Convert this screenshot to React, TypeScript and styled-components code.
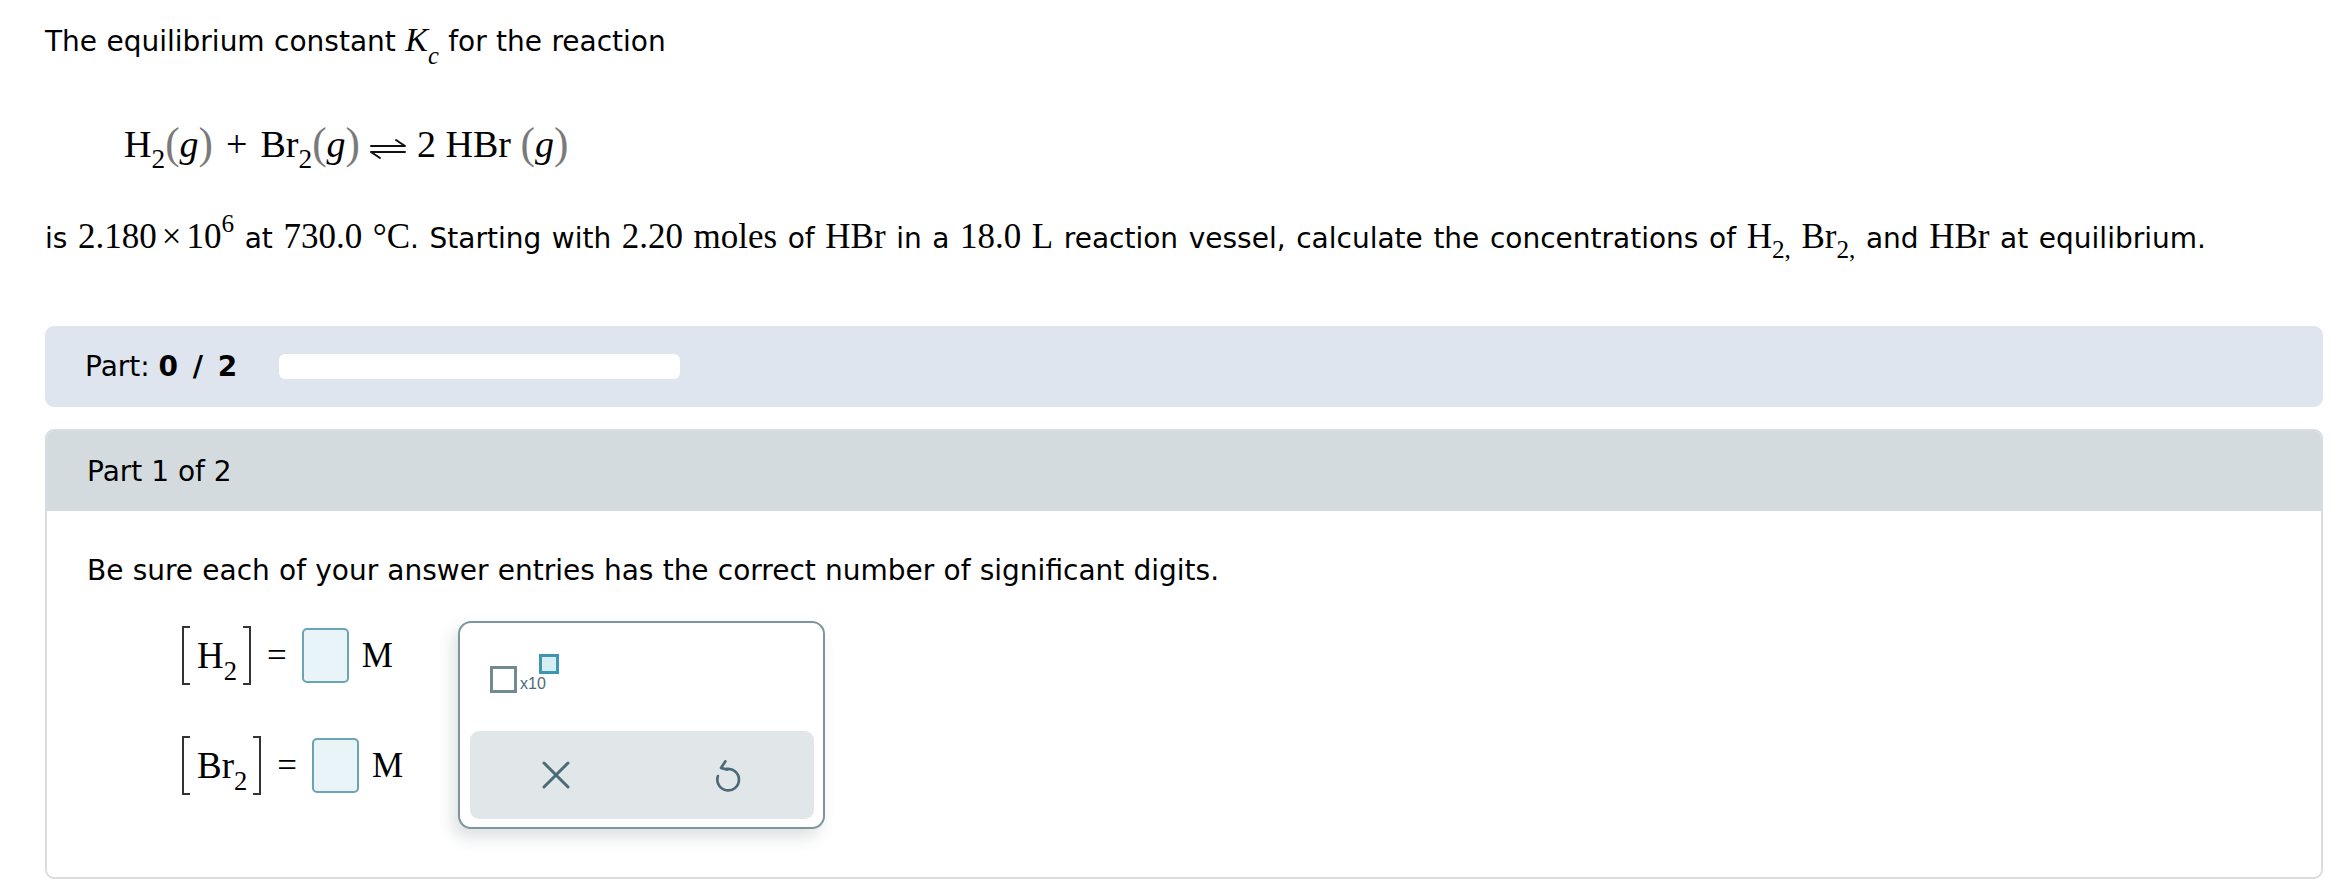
import React from "react";
import styled, { createGlobalStyle } from "styled-components";

const GlobalStyle = createGlobalStyle`
    html, body {
        margin: 0;
        padding: 0;
        background: #ffffff;
    }
    body {
        font-family: "DejaVu Sans", Verdana, sans-serif;
        font-size: 28px;
        color: #000000;
    }
`;

const Page = styled.div`
    padding: 22px 25px 40px 45px;
`;

const Line = styled.p<{ $mt?: number; $indent?: number; $ws?: number }>`
    margin: ${(p) => p.$mt ?? 0}px 0 0 ${(p) => p.$indent ?? 0}px;
    height: 40px;
    line-height: 40px;
    white-space: nowrap;
    word-spacing: ${(p) => p.$ws ?? 0}px;
`;

const M = styled.span<{ $size?: number }>`
    font-family: "Liberation Serif", "Times New Roman", serif;
    font-size: ${(p) => p.$size ?? 35}px;
    line-height: 1;
`;

const I = styled.i`
    font-style: italic;
`;

const Sub = styled.span<{ $drop?: number }>`
    font-size: 0.72em;
    line-height: 0;
    vertical-align: -${(p) => p.$drop ?? 10}px;
`;

const Sup = styled.span<{ $rise?: number }>`
    font-size: 0.72em;
    line-height: 0;
    vertical-align: ${(p) => p.$rise ?? 16}px;
`;

const Paren = styled.span`
    color: #7a7a7a;
    font-size: 1.14em;
    line-height: 0;
    vertical-align: -1px;
`;

const Op = styled.span<{ $gap: number }>`
    margin: 0 ${(p) => p.$gap}px;
`;

const Harpoon = styled.svg`
    width: 38px;
    height: 22px;
    margin: 0 10px 0 9px;
    vertical-align: -3px;
`;

const PartBar = styled.div`
    margin-top: 67px;
    height: 81px;
    border-radius: 9px;
    background: #dee5ef;
    display: flex;
    align-items: center;
    padding-left: 40px;
`;

const PartLabel = styled.span`
    white-space: nowrap;
    b {
        font-weight: 700;
        word-spacing: 5px;
    }
`;

const Progress = styled.div`
    margin-left: 42px;
    width: 401px;
    height: 25px;
    border-radius: 6px;
    background: #ffffff;
`;

const Card = styled.section`
    margin-top: 22px;
    border: 2px solid #d9dde0;
    border-radius: 9px;
    overflow: hidden;
`;

const CardHeader = styled.div`
    height: 80px;
    background: #d3dbdf;
    display: flex;
    align-items: center;
    padding-left: 40px;
`;

const CardBody = styled.div`
    padding: 40px 40px 48px 40px;
`;

const Answers = styled.div`
    margin-top: 30px;
    display: flex;
    align-items: flex-start;
`;

const Rows = styled.div`
    flex: 0 0 371px;
    padding: 3px 0 0 95px;
    box-sizing: border-box;
    display: flex;
    flex-direction: column;
    gap: 48px;
`;

const Row = styled.div`
    height: 62px;
    display: flex;
    align-items: center;
    font-family: "Liberation Serif", "Times New Roman", serif;
    font-size: 35px;
`;

const Bracketed = styled.span`
    display: inline-flex;
    align-items: center;
    height: 58px;
`;

const Bracket = styled.span<{ $side: "left" | "right" }>`
    width: 6px;
    height: 55px;
    border: 2px solid #333333;
    ${(p) => (p.$side === "left" ? "border-right: none;" : "border-left: none;")}
`;

const Species = styled.span`
    font-size: 37px;
    padding: 0 6px 0 7px;
    line-height: 1;
`;

const Equals = styled.span<{ $ml: number }>`
    margin-left: ${(p) => p.$ml}px;
    line-height: 1;
`;

const InputBox = styled.span`
    margin-left: 15px;
    width: 47px;
    height: 55px;
    box-sizing: border-box;
    border: 2px solid #6ba4b4;
    border-radius: 5px;
    background: #e8f4f8;
`;

const Unit = styled.span`
    margin-left: 13px;
    line-height: 1;
`;

const Keypad = styled.div`
    width: 367px;
    height: 208px;
    box-sizing: border-box;
    border: 2px solid #7e959e;
    border-radius: 13px;
    background: #ffffff;
    box-shadow: -5px 8px 16px rgba(40, 60, 70, 0.16);
    display: flex;
    flex-direction: column;
`;

const KeyTop = styled.div`
    flex: 1;
    padding: 31px 0 0 30px;
`;

const SciKey = styled.span`
    display: inline-flex;
    align-items: flex-end;
    height: 39px;
`;

const BaseBox = styled.span`
    width: 27px;
    height: 27px;
    box-sizing: border-box;
    border: 3px solid #6f8a95;
`;

const TimesTen = styled.span`
    font-family: "Liberation Sans", Arial, sans-serif;
    font-size: 16px;
    line-height: 16px;
    color: #4c6a77;
    margin: 0 0 1px 3px;
`;

const ExpBox = styled.span`
    align-self: flex-start;
    width: 20px;
    height: 20px;
    box-sizing: border-box;
    border: 3px solid #3d97b0;
    background: #d6eef3;
    margin-left: -7px;
`;

const KeyRow = styled.div`
    height: 88px;
    margin: 0 9px 8px 10px;
    border-radius: 9px;
    background: #e1e6e8;
    display: flex;
`;

const KeyButton = styled.button`
    flex: 1;
    border: none;
    background: transparent;
    display: flex;
    align-items: center;
    justify-content: center;
    padding: 0;
    cursor: pointer;
`;

const Icon = styled.svg`
    display: block;
`;

export default function App(): React.ReactElement {
    return (
        <>
            <GlobalStyle />
            <Page>
                <Line $ws={0.5}>
                    The equilibrium constant{" "}
                    <M $size={34}>
                        <I>K</I>
                        <Sub $drop={13}>
                            <I>c</I>
                        </Sub>
                    </M>{" "}
                    for the reaction
                </Line>

                <Line $mt={63} $indent={79}>
                    <M $size={38}>
                        H<Sub $drop={11}>2</Sub>
                        <Paren>(</Paren>
                        <I>g</I>
                        <Paren>)</Paren>
                        <Op $gap={13}>+</Op>
                        Br<Sub $drop={11}>2</Sub>
                        <Paren>(</Paren>
                        <I>g</I>
                        <Paren>)</Paren>
                    </M>
                    <Harpoon viewBox="0 0 38 22">
                        <path d="M2 8 H36 L27 2" fill="none" stroke="#111" strokeWidth="2" strokeLinecap="round" strokeLinejoin="round" />
                        <path d="M36 14 H2 L11 20" fill="none" stroke="#111" strokeWidth="2" strokeLinecap="round" strokeLinejoin="round" />
                    </Harpoon>
                    <M $size={38}>
                        2 HBr{" "}
                        <Paren>(</Paren>
                        <I>g</I>
                        <Paren>)</Paren>
                    </M>
                </Line>

                <Line $mt={54} $ws={1.7}>
                    is{" "}
                    <M>
                        2.180<Op $gap={5}>×</Op>10<Sup $rise={16}>6</Sup>
                    </M>{" "}
                    at <M>730.0 °C</M>. Starting with <M>2.20 moles</M> of <M>HBr</M> in a <M>18.0 L</M> reaction
                    vessel, calculate the concentrations of{" "}
                    <M>
                        H<Sub $drop={10}>2,</Sub>
                    </M>{" "}
                    <M>
                        Br<Sub $drop={10}>2,</Sub>
                    </M>{" "}
                    and <M>HBr</M> at equilibrium.
                </Line>

                <PartBar>
                    <PartLabel>
                        Part: <b>0 / 2</b>
                    </PartLabel>
                    <Progress />
                </PartBar>

                <Card>
                    <CardHeader>Part 1 of 2</CardHeader>
                    <CardBody>
                        <Line $ws={0.3}>Be sure each of your answer entries has the correct number of significant digits.</Line>
                        <Answers>
                            <Rows>
                                <Row>
                                    <Bracketed>
                                        <Bracket $side="left" />
                                        <Species>
                                            H<Sub $drop={12}>2</Sub>
                                        </Species>
                                        <Bracket $side="right" />
                                    </Bracketed>
                                    <Equals $ml={16}>=</Equals>
                                    <InputBox />
                                    <Unit>M</Unit>
                                </Row>
                                <Row>
                                    <Bracketed>
                                        <Bracket $side="left" />
                                        <Species>
                                            Br<Sub $drop={12}>2</Sub>
                                        </Species>
                                        <Bracket $side="right" />
                                    </Bracketed>
                                    <Equals $ml={16}>=</Equals>
                                    <InputBox />
                                    <Unit>M</Unit>
                                </Row>
                            </Rows>
                            <Keypad>
                                <KeyTop>
                                    <SciKey>
                                        <BaseBox />
                                        <TimesTen>x10</TimesTen>
                                        <ExpBox />
                                    </SciKey>
                                </KeyTop>
                                <KeyRow>
                                    <KeyButton aria-label="clear">
                                        <Icon width="28" height="28" viewBox="0 0 28 28">
                                            <path d="M2 2 L26 26 M26 2 L2 26" stroke="#4b6a77" strokeWidth="3" strokeLinecap="round" fill="none" />
                                        </Icon>
                                    </KeyButton>
                                    <KeyButton aria-label="undo">
                                        <Icon width="28" height="34" viewBox="0 0 26 33">
                                            <path
                                                d="M3.2 17.6 A10.5 10.5 0 1 0 11.6 10.6"
                                                stroke="#4b6a77"
                                                strokeWidth="2.6"
                                                strokeLinecap="round"
                                                fill="none"
                                            />
                                            <path
                                                d="M10.5 3.2 L6.2 9.6 L12.4 11.4"
                                                stroke="#4b6a77"
                                                strokeWidth="2.6"
                                                strokeLinecap="round"
                                                strokeLinejoin="round"
                                                fill="none"
                                            />
                                        </Icon>
                                    </KeyButton>
                                </KeyRow>
                            </Keypad>
                        </Answers>
                    </CardBody>
                </Card>
            </Page>
        </>
    );
}
